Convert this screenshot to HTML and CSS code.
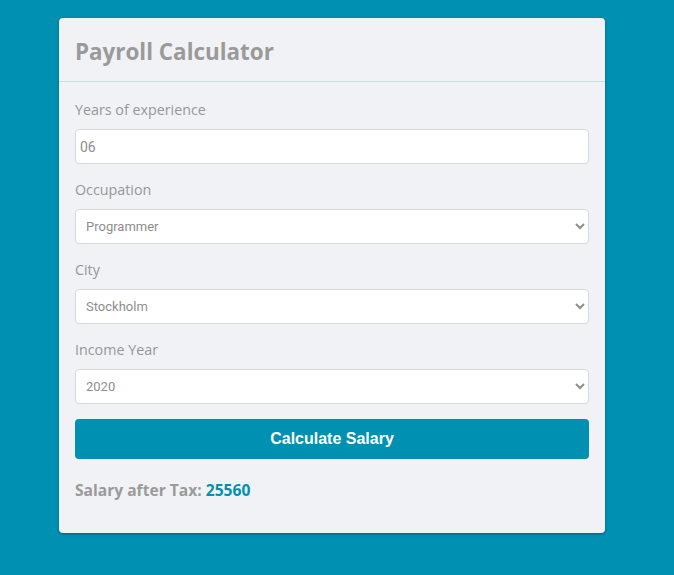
FILE: index.html
```html
<!DOCTYPE html>
<html lang="en">
<head>
<meta charset="utf-8">
<title>Payroll Calculator</title>
<link rel="stylesheet" href="styles.css">
</head>
<body>
<div class="card">
  <div class="card-header">
    <h1 class="title">Payroll Calculator</h1>
  </div>
  <div class="card-body">
    <div class="field">
      <label class="label" for="years">Years of experience</label>
      <input class="control input" id="years" type="text" value="06">
    </div>
    <div class="field">
      <label class="label" for="occ">Occupation</label>
      <select class="control select" id="occ"><option>Programmer</option></select>
    </div>
    <div class="field">
      <label class="label" for="city">City</label>
      <select class="control select" id="city"><option>Stockholm</option></select>
    </div>
    <div class="field">
      <label class="label" for="year">Income Year</label>
      <select class="control select" id="year"><option>2020</option></select>
    </div>
    <button class="btn" type="button">Calculate Salary</button>
    <p class="result">Salary after Tax: <span class="amount">25560</span></p>
  </div>
</div>
</body>
</html>
```
FILE: styles.css
```css
html, body {
  margin: 0;
  padding: 0;
}
body {
  background: #0090b2;
  font-family: "Open Sans", "Noto Sans", sans-serif;
  color: #9a9a9a;
  padding-top: 18px;
  min-height: 575px;
  box-sizing: border-box;
}
.card {
  width: 546px;
  height: 515px;
  margin-left: 59px;
  background: #f0f2f6;
  border-radius: 4px;
  box-shadow: 0 1px 3px rgba(0,0,0,0.35);
  box-sizing: border-box;
}
.card-header {
  height: 64px;
  border-bottom: 1px solid #c9dfe3;
  padding: 0 16px;
  display: flex;
  align-items: center;
  box-sizing: border-box;
}
.title {
  margin: 0;
  font-size: 22.4px;
  font-weight: 700;
  color: #9a9a9a;
  padding-top: 3px;
}
.card-body {
  padding: 17px 16px 0;
}
.field {
  display: flex;
  flex-direction: column;
  margin-bottom: 15px;
}
.label {
  font-size: 14.3px;
  line-height: 20px;
  padding-top: 1px;
  margin-bottom: 9px;
  color: #979797;
}
.control {
  height: 35px;
  width: 514px;
  box-sizing: border-box;
  border: 1px solid #d3dbe0;
  border-radius: 4px;
  background-color: #fff;
  color: #8e8e8e;
  font-family: "Roboto", "Liberation Sans", sans-serif;
  font-size: 13px;
  outline: none;
  margin: 0;
}
.input {
  padding: 0 4px;
  font-size: 14px;
}
.select {
  padding: 0 6px;
}
.btn {
  display: block;
  width: 514px;
  height: 40px;
  border: none;
  border-radius: 4px;
  background: #0090b2;
  color: #fff;
  font-family: "Liberation Sans", Arial, sans-serif;
  font-weight: 700;
  font-size: 16px;
  margin: 0;
  padding: 0;
}
.result {
  margin: 21px 0 0;
  font-size: 15.6px;
  font-weight: 700;
  color: #9a9a9a;
  line-height: 20px;
}
.amount {
  color: #0090b2;
}
```
